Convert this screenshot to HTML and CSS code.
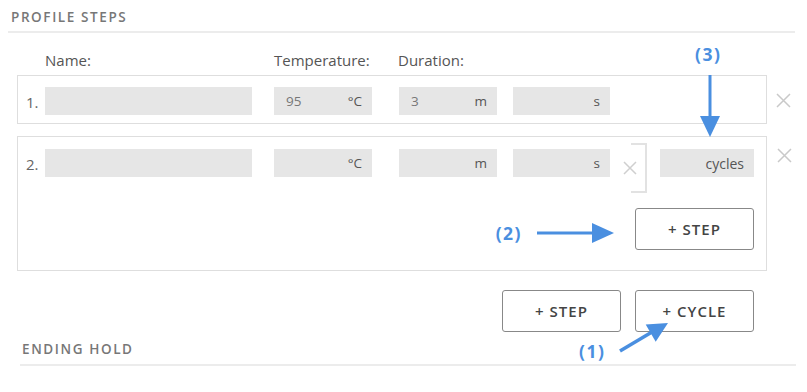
FILE: index.html
```html
<!DOCTYPE html>
<html lang="en">
<head>
    <meta charset="UTF-8">
    <title>Profile Steps</title>
    <link rel="stylesheet" href="styles.css">
</head>
<body>
    <h2 class="section-title">PROFILE STEPS</h2>

    <div class="steps">
        <div class="col-labels">
            <span class="col-name">Name:</span>
            <span class="col-temp">Temperature:</span>
            <span>Duration:</span>
        </div>

        <div class="card-row">
            <div class="card">
                <div class="step-row">
                    <span class="step-num">1.</span>
                    <div class="field name"></div>
                    <div class="field temp"><span class="value">95</span><span class="unit">°C</span></div>
                    <div class="field mins"><span class="value">3</span><span class="unit">m</span></div>
                    <div class="field secs"><span class="value"></span><span class="unit">s</span></div>
                </div>
            </div>
            <button class="remove remove-first" title="Remove">
                <svg width="15" height="15" viewBox="0 0 15 15"><path d="M1 1L14 14M14 1L1 14" stroke="#c9c9c9" stroke-width="1.5" fill="none"/></svg>
            </button>
        </div>

        <div class="card-row">
            <div class="card cycle">
                <div class="cycle-main">
                    <div class="step-row">
                        <span class="step-num">2.</span>
                        <div class="field name"></div>
                        <div class="field temp"><span class="value"></span><span class="unit">°C</span></div>
                        <div class="field mins"><span class="value"></span><span class="unit">m</span></div>
                        <div class="field secs"><span class="value"></span><span class="unit">s</span></div>
                        <button class="remove remove-small" title="Remove">
                            <svg width="14" height="14" viewBox="0 0 14 14"><path d="M1 1L13 13M13 1L1 13" stroke="#cfcfcf" stroke-width="1.5" fill="none"/></svg>
                        </button>
                    </div>
                    <div class="bracket"></div>
                    <div class="field cycles"><span class="value"></span><span class="unit">cycles</span></div>
                </div>
                <div class="cycle-actions">
                    <span class="note">(2)</span>
                    <svg class="note-arrow" width="77" height="20" viewBox="0 0 77 20">
                        <path d="M0 10H58" stroke="#4a8fe0" stroke-width="3"/>
                        <path d="M55 0L77 10L55 20Z" fill="#4a8fe0"/>
                    </svg>
                    <button class="btn">+ STEP</button>
                </div>
            </div>
            <button class="remove remove-cycle" title="Remove">
                <svg width="15" height="15" viewBox="0 0 15 15"><path d="M1 1L14 14M14 1L1 14" stroke="#c9c9c9" stroke-width="1.5" fill="none"/></svg>
            </button>
        </div>

        <div class="actions">
            <button class="btn">+ STEP</button>
            <button class="btn">+ CYCLE</button>
        </div>
    </div>

    <h2 class="section-title ending">ENDING HOLD</h2>

    <!-- annotation overlay -->
    <span class="note note-3">(3)</span>
    <span class="note note-1">(1)</span>
    <svg class="overlay" width="807" height="392" viewBox="0 0 807 392">
        <path d="M710 75V119" stroke="#4a8fe0" stroke-width="3"/>
        <path d="M700 116L720 116L710 137Z" fill="#4a8fe0"/>
        <path d="M620 351L652 332" stroke="#4a8fe0" stroke-width="3.5"/>
        <path d="M668 323L655.7 341.7L645.7 324.5Z" fill="#4a8fe0"/>
    </svg>
</body>
</html>
```

FILE: styles.css
```css
* {
    box-sizing: border-box;
}
body {
    font-family: "Open Sans", "DejaVu Sans", sans-serif;
    margin: 0;
    padding: 0;
    background: #fff;
    color: #555;
    width: 807px;
    height: 392px;
    overflow: hidden;
    position: relative;
}
.section-title {
    margin: 0 12px 0 8px;
    padding: 9px 0 6px 3px;
    font-size: 13.5px;
    line-height: 16px;
    font-weight: 600;
    letter-spacing: 1.6px;
    color: #777;
    border-bottom: 2px solid #ececec;
}
.section-title.ending {
    margin: 9px 11px 0 20px;
    padding: 0 0 7px 2px;
}
.steps {
    padding-left: 17px;
}
.col-labels {
    display: flex;
    margin-top: 18px;
    margin-bottom: 6px;
    padding-left: 28px;
    font-size: 15px;
    line-height: 18px;
    color: #555;
}
.col-name {
    width: 229px;
}
.col-temp {
    width: 124px;
}
.card-row {
    display: flex;
    align-items: flex-start;
    margin-bottom: 12px;
}
.card {
    width: 750px;
    border: 1px solid #dedede;
    padding: 11px 12px 8px 8px;
}
.step-row {
    display: flex;
    align-items: flex-start;
}
.step-num {
    width: 19px;
    font-size: 15px;
    line-height: 28px;
    padding-top: 1px;
    height: 28px;
    color: #666;
}
.field {
    display: flex;
    justify-content: space-between;
    align-items: center;
    height: 28px;
    padding: 0 10px 0 12px;
    background: #e6e6e6;
    font-size: 13.5px;
    color: #555;
}
.field .value {
    color: #777;
}
.field.name {
    width: 207px;
}
.field.temp {
    width: 98px;
    margin-left: 22px;
}
.field.mins {
    width: 98px;
    margin-left: 27px;
}
.field.secs {
    width: 97px;
    margin-left: 16px;
}
.remove {
    border: none;
    background: none;
    padding: 0;
    cursor: pointer;
    line-height: 0;
}
.remove-first {
    margin: 18px 0 0 9px;
}
.remove-cycle {
    margin: 12px 0 0 10px;
}
.remove-small {
    margin: 12px 0 0 13px;
}
.card.cycle {
    padding: 6px 12px 20px 8px;
}
.cycle-main {
    display: flex;
    align-items: flex-start;
}
.cycle-main .step-row {
    margin-top: 6px;
}
.bracket {
    width: 17px;
    height: 50px;
    margin-left: -6px;
    border: 2px solid #e2e2e2;
    border-left: none;
}
.field.cycles {
    width: 97px;
    margin: 6px 0 0 13px;
    font-size: 14px;
}
.cycle-actions {
    display: flex;
    justify-content: flex-end;
    align-items: center;
    margin-top: 15px;
}
.note {
    font-size: 17.5px;
    line-height: 20px;
    font-weight: 700;
    letter-spacing: 1.5px;
    color: #4a8fe0;
}
.cycle-actions .note {
    margin: 7px 15px 0 0;
}
.note-arrow {
    margin: 7px 21px 0 0;
}
.btn {
    width: 119px;
    height: 42px;
    border: 1px solid #888;
    border-radius: 3px;
    background: #fff;
    font-family: "Open Sans", sans-serif;
    font-size: 15px;
    font-weight: 600;
    letter-spacing: 1px;
    color: #444;
    cursor: pointer;
}
.actions {
    display: flex;
    justify-content: flex-end;
    gap: 14px;
    width: 750px;
    padding-right: 13px;
    margin-top: 19px;
}
.note-3, .note-1 {
    position: absolute;
}
.note-3 {
    left: 695px;
    top: 44px;
}
.note-1 {
    left: 579px;
    top: 341px;
}
.overlay {
    position: absolute;
    left: 0;
    top: 0;
    pointer-events: none;
}
```
